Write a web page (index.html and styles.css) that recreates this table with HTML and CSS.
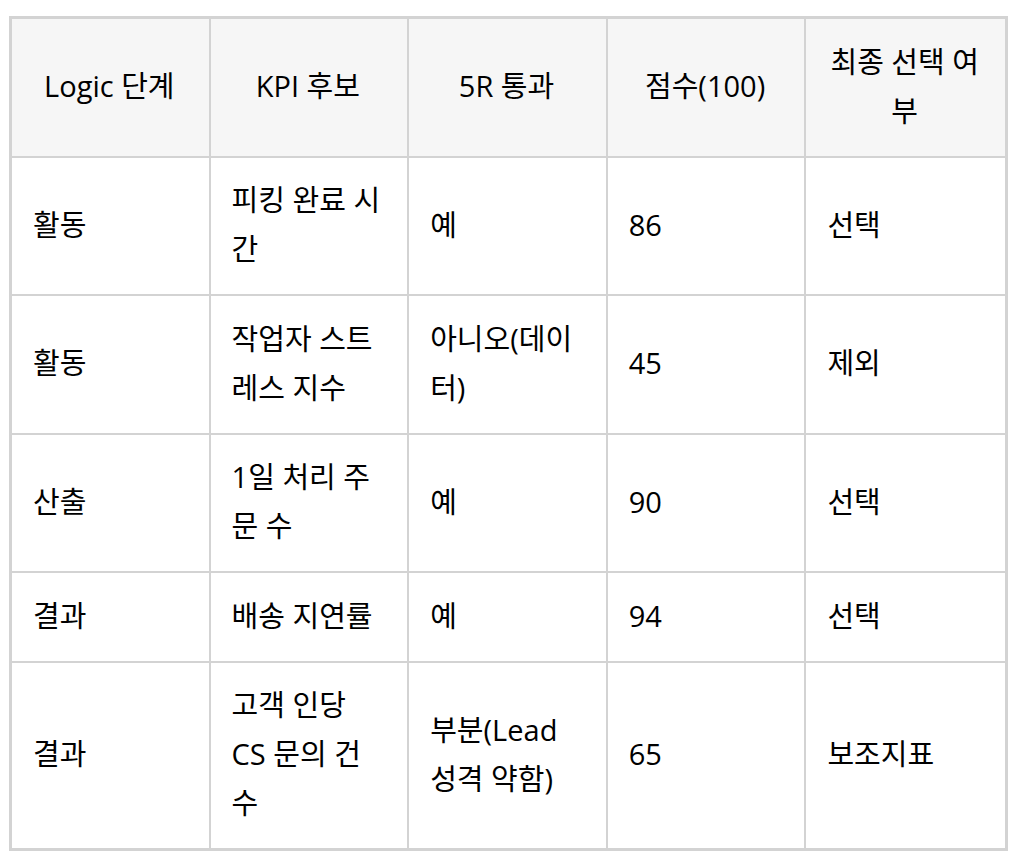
FILE: index.html
```html
<!DOCTYPE html>
<html lang="ko">
<head>
<meta charset="utf-8">
<link rel="stylesheet" href="styles.css">
</head>
<body>
<div class="wrap">
<table class="kpi">
  <thead>
    <tr>
      <th>Logic 단계</th>
      <th>KPI 후보</th>
      <th>5R 통과</th>
      <th>점수(100)</th>
      <th>최종 선택 여부</th>
    </tr>
  </thead>
  <tbody>
    <tr><td>활동</td><td>피킹 완료 시간</td><td>예</td><td>86</td><td>선택</td></tr>
    <tr><td>활동</td><td>작업자 스트레스 지수</td><td>아니오(데이터)</td><td>45</td><td>제외</td></tr>
    <tr><td>산출</td><td>1일 처리 주문 수</td><td>예</td><td>90</td><td>선택</td></tr>
    <tr><td>결과</td><td>배송 지연률</td><td>예</td><td>94</td><td>선택</td></tr>
    <tr><td>결과</td><td>고객 인당 CS 문의 건수</td><td>부분(Lead 성격 약함)</td><td>65</td><td>보조지표</td></tr>
  </tbody>
</table>
</div>
</body>
</html>
```

FILE: styles.css
```css
html, body {
  margin: 0;
  padding: 0;
  background: #ffffff;
}

.wrap {
  padding: 16px 0 0 9px;
}

.kpi {
  width: 999px;
  border: 3px solid #d3d3d3;
  border-collapse: separate;
  border-spacing: 0;
  table-layout: fixed;
  font-family: "Open Sans", "Noto Sans CJK KR", sans-serif;
  font-size: 29px;
  line-height: 49px;
  color: #000000;
}

.kpi th,
.kpi td {
  padding: 17.75px 23px 20.75px 21px;
  vertical-align: middle;
  border-right: 2px solid #d3d3d3;
  border-bottom: 2px solid #d3d3d3;
  text-align: left;
  font-weight: normal;
}

.kpi th {
  background: #f6f6f6;
  text-align: center;
}

.kpi tr > :last-child {
  border-right: none;
}

.kpi tbody tr:last-child > * {
  border-bottom: none;
}
```
